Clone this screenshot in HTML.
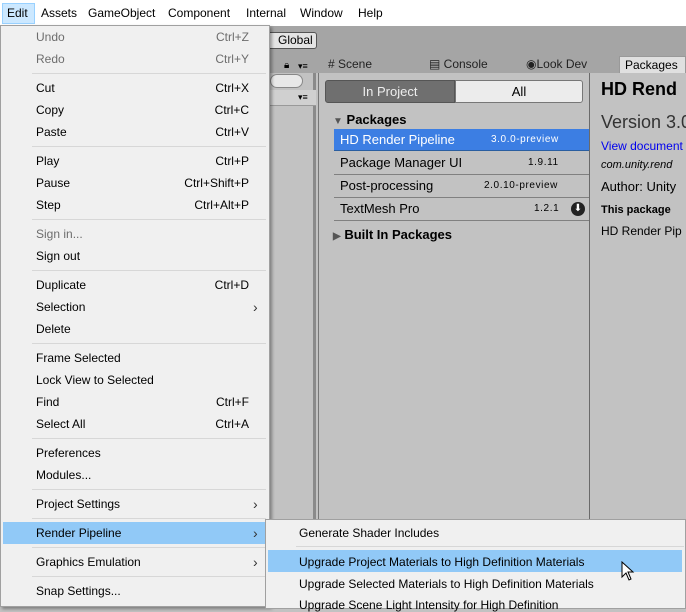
<!DOCTYPE html>
<html><head><style>
*{margin:0;padding:0;box-sizing:border-box}
body{width:686px;height:609px;overflow:hidden;position:relative;background:#c2c2c2;font-family:"Liberation Sans",sans-serif;font-size:12px}
.a{position:absolute;white-space:nowrap}
.menubar{left:0;top:0;width:686px;height:26px;background:#fff}
.mb{top:6px;font-size:12px;color:#000}
.menu{left:0;top:25px;width:270px;height:582px;background:#f0f0f0;border:1px solid #a0a0a0;box-shadow:2px 2px 3px rgba(0,0,0,.35)}
.it{position:absolute;left:35px;font-size:12px;color:#000}
.sc{position:absolute;right:20px;font-size:12px;color:#000}
.dis{color:#6d6d6d}
.sep{position:absolute;left:31px;right:3px;height:1px;background:#d7d7d7}
.arr{position:absolute;left:252px;font-size:14px;line-height:14px;color:#333}
</style></head><body>
<div class="a" style="left:270px;top:26px;width:416px;height:27px;background:#a5a5a5"></div>
<div class="a" style="left:264px;top:32px;width:53px;height:17px;background:#e4e4e4;border:1px solid #555;border-radius:3px;font-size:12px;padding-left:13px;line-height:15px">Global</div>
<div class="a" style="left:270px;top:53px;width:416px;height:20px;background:#a5a5a5"></div>
<div class="a" style="left:270px;top:73px;width:46px;height:536px;background:#c2c2c2;border-right:3px solid #8a8a8a"></div>
<div class="a" style="left:270px;top:74px;width:33px;height:14px;background:#e8e8e8;border:1px solid #888;border-radius:7px"></div>
<div class="a" style="left:270px;top:90px;width:46px;height:16px;background:#d0d0d0;border-bottom:1px solid #999"></div>
<div class="a" style="left:284px;top:60px;font-size:10px">🔒︎</div>
<div class="a" style="left:298px;top:61px;font-size:9px">▾≡</div>
<div class="a" style="left:298px;top:92px;font-size:9px">▾≡</div>
<div class="a" style="left:328px;top:57px;font-size:12px;color:#222">#&nbsp;Scene</div>
<div class="a" style="left:429px;top:57px;font-size:12px;color:#222">▤&nbsp;Console</div>
<div class="a" style="left:526px;top:57px;font-size:12px;color:#222">◉Look Dev</div>
<div class="a" style="left:619px;top:56px;width:67px;height:17px;background:#e0e0e0;border:1px solid #999;border-bottom:none;font-size:12px;padding-left:5px;line-height:16px">Packages</div>
<div class="a" style="left:318px;top:73px;width:271px;height:536px;background:#c2c2c2;border-left:1px solid #777"></div>
<div class="a" style="left:589px;top:73px;width:1px;height:536px;background:#6a6a6a"></div>
<div class="a" style="left:325px;top:80px;width:130px;height:23px;background:#6f6f6f;border:1px solid #555;border-radius:3px 0 0 3px;color:#eee;font-size:13px;text-align:center;line-height:21px">In Project</div>
<div class="a" style="left:455px;top:80px;width:128px;height:23px;background:#ececec;border:1px solid #777;border-radius:0 3px 3px 0;font-size:13px;text-align:center;line-height:21px">All</div>
<div class="a" style="left:333px;top:112px;font-size:13px;font-weight:bold"><span style="font-size:10px;color:#555">▼</span> Packages</div>
<div class="a" style="left:334px;top:129px;width:255px;height:22px;background:#3c7ee3;border-bottom:1px solid #2a5ea0"></div>
<div class="a" style="left:340px;top:132px;font-size:13px;color:#fff">HD Render Pipeline</div>
<div class="a" style="left:491px;top:134px;font-size:10px;color:#fff;letter-spacing:.6px">3.0.0-preview</div>
<div class="a" style="left:334px;top:174px;width:255px;height:1px;background:#808080"></div>
<div class="a" style="left:334px;top:197px;width:255px;height:1px;background:#808080"></div>
<div class="a" style="left:334px;top:220px;width:255px;height:1px;background:#808080"></div>
<div class="a" style="left:340px;top:155px;font-size:13px">Package Manager UI</div>
<div class="a" style="left:528px;top:157px;font-size:10px;letter-spacing:.6px">1.9.11</div>
<div class="a" style="left:340px;top:178px;font-size:13px">Post-processing</div>
<div class="a" style="left:484px;top:180px;font-size:10px;letter-spacing:.6px">2.0.10-preview</div>
<div class="a" style="left:340px;top:201px;font-size:13px">TextMesh Pro</div>
<div class="a" style="left:534px;top:203px;font-size:10px;letter-spacing:.6px">1.2.1</div>
<div class="a" style="left:571px;top:202px;width:14px;height:14px;border-radius:7px;background:#222;color:#fff;font-size:10px;text-align:center;line-height:14px">⬇</div>
<div class="a" style="left:333px;top:227px;font-size:13px;font-weight:bold"><span style="font-size:10px;color:#555">▶</span> Built In Packages</div>
<div class="a" style="left:601px;top:79px;font-size:18px;font-weight:bold">HD Rend</div>
<div class="a" style="left:601px;top:112px;font-size:18px;color:#333">Version 3.0</div>
<div class="a" style="left:601px;top:139px;font-size:12px;color:#0000ee">View document</div>
<div class="a" style="left:601px;top:159px;font-size:11px;font-style:italic">com.unity.rend</div>
<div class="a" style="left:601px;top:179px;font-size:13px">Author: Unity</div>
<div class="a" style="left:601px;top:204px;font-size:11px;font-weight:bold">This package</div>
<div class="a" style="left:601px;top:224px;font-size:12px">HD Render Pip</div>

<div class="a menubar"></div>
<div class="a" style="left:2px;top:3px;width:33px;height:21px;background:#cce8ff;border:1px solid #99d1ff"></div>
<div class="a mb" style="left:7px">Edit</div>
<div class="a mb" style="left:41px">Assets</div>
<div class="a mb" style="left:88px">GameObject</div>
<div class="a mb" style="left:168px">Component</div>
<div class="a mb" style="left:246px">Internal</div>
<div class="a mb" style="left:300px">Window</div>
<div class="a mb" style="left:358px">Help</div>

<div class="a menu">
<div class="it dis" style="top:4px">Undo</div><div class="sc dis" style="top:4px">Ctrl+Z</div>
<div class="it dis" style="top:26px">Redo</div><div class="sc dis" style="top:26px">Ctrl+Y</div>
<div class="sep" style="top:47px"></div>
<div class="it" style="top:55px">Cut</div><div class="sc" style="top:55px">Ctrl+X</div>
<div class="it" style="top:77px">Copy</div><div class="sc" style="top:77px">Ctrl+C</div>
<div class="it" style="top:99px">Paste</div><div class="sc" style="top:99px">Ctrl+V</div>
<div class="sep" style="top:120px"></div>
<div class="it" style="top:128px">Play</div><div class="sc" style="top:128px">Ctrl+P</div>
<div class="it" style="top:150px">Pause</div><div class="sc" style="top:150px">Ctrl+Shift+P</div>
<div class="it" style="top:172px">Step</div><div class="sc" style="top:172px">Ctrl+Alt+P</div>
<div class="sep" style="top:193px"></div>
<div class="it dis" style="top:201px">Sign in...</div>
<div class="it" style="top:223px">Sign out</div>
<div class="sep" style="top:244px"></div>
<div class="it" style="top:252px">Duplicate</div><div class="sc" style="top:252px">Ctrl+D</div>
<div class="it" style="top:274px">Selection</div><div class="arr" style="top:274px">›</div>
<div class="it" style="top:296px">Delete</div>
<div class="sep" style="top:317px"></div>
<div class="it" style="top:325px">Frame Selected</div>
<div class="it" style="top:347px">Lock View to Selected</div>
<div class="it" style="top:369px">Find</div><div class="sc" style="top:369px">Ctrl+F</div>
<div class="it" style="top:391px">Select All</div><div class="sc" style="top:391px">Ctrl+A</div>
<div class="sep" style="top:412px"></div>
<div class="it" style="top:420px">Preferences</div>
<div class="it" style="top:442px">Modules...</div>
<div class="sep" style="top:463px"></div>
<div class="it" style="top:471px">Project Settings</div><div class="arr" style="top:471px">›</div>
<div class="sep" style="top:492px"></div>
<div style="position:absolute;left:2px;top:496px;width:264px;height:22px;background:#91c9f7"></div>
<div class="it" style="top:500px">Render Pipeline</div><div class="arr" style="top:500px">›</div>
<div class="sep" style="top:521px"></div>
<div class="it" style="top:529px">Graphics Emulation</div><div class="arr" style="top:529px">›</div>
<div class="sep" style="top:550px"></div>
<div class="it" style="top:558px">Snap Settings...</div>
</div>

<div class="a" style="left:265px;top:519px;width:421px;height:90px;background:#f0f0f0;border:1px solid #a0a0a0"></div>
<div class="a" style="left:299px;top:526px">Generate Shader Includes</div>
<div class="a" style="left:296px;top:546px;width:388px;height:1px;background:#d7d7d7"></div>
<div class="a" style="left:268px;top:550px;width:414px;height:22px;background:#91c9f7"></div>
<div class="a" style="left:299px;top:555px">Upgrade Project Materials to High Definition Materials</div>
<div class="a" style="left:299px;top:577px">Upgrade Selected Materials to High Definition Materials</div>
<div class="a" style="left:299px;top:598px">Upgrade Scene Light Intensity for High Definition</div>
<svg class="a" style="left:621px;top:561px" width="14" height="22" viewBox="0 0 14 22"><path d="M1 1 L1 16 L5 12 L8 19 L10 18 L7 11 L12 11 Z" fill="#fff" stroke="#000" stroke-width="1"/></svg>
</body></html>
